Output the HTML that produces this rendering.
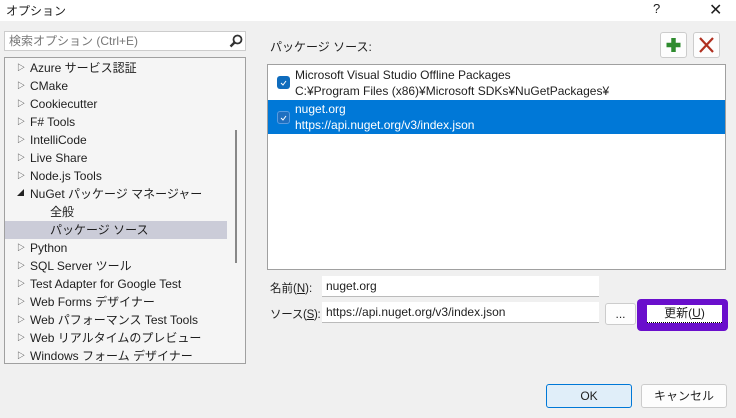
<!DOCTYPE html>
<html><head><meta charset="utf-8"><style>
*{box-sizing:border-box;margin:0;padding:0}
body{width:736px;height:418px;background:#f0f0f0;font-family:"Liberation Sans","Noto Sans CJK JP",sans-serif;font-size:12px;color:#1e1e1e;position:relative;overflow:hidden}
.a{position:absolute}
.title{left:0;top:0;width:736px;height:21px;background:#fff}
.search{left:4px;top:31px;width:242px;height:20px;background:#fff;border:1px solid #ccc;color:#777;padding:1px 4px;line-height:16px}
.tree{left:4px;top:57px;width:242px;height:307px;background:#f5f5f5;border:1px solid #a0a0a0}
.row{position:absolute;left:0;width:222px;height:18px;line-height:18px;white-space:nowrap}
.arr{position:absolute;left:12px;top:0;font-size:8px;color:#222}
.lbl{position:absolute;left:25px}
.list{left:267px;top:64px;width:459px;height:206px;background:#fff;border:1px solid #a0a0a0}
.item{position:absolute;left:0;width:457px;height:35px}
.cb{position:absolute;left:9px;top:11px;width:13px;height:13px;border-radius:3px;background:#0f6cbd}
.t1{position:absolute;left:27px;top:2px;line-height:16px}
.tb{background:#fff;border-bottom:1px solid #bbb;height:21px;padding-left:4px;line-height:21px}
.btn{background:#fdfdfd;border:1px solid #ccc;border-radius:3px;text-align:center}
</style></head><body>
<div class="a title"></div>
<div class="a" style="left:6px;top:2px;font-size:12px">オプション</div>
<div class="a" style="left:653px;top:1px;font-size:13px">?</div>
<div class="a" style="left:709px;top:0px;font-size:16px">✕</div>

<div class="a search">検索オプション (Ctrl+E)</div>
<svg class="a" style="left:229px;top:34px" width="14" height="14" viewBox="0 0 14 14"><circle cx="8.5" cy="5.5" r="4" fill="none" stroke="#333" stroke-width="1.8"/><path d="M5.5 8.5L1.5 12.5" stroke="#333" stroke-width="2.4"/></svg>

<div class="a tree">
<div style="position:absolute;left:230px;top:72px;width:2px;height:133px;background:#888"></div>
<div class="row" style="top:1px"><span class="arr">▷</span><span class="lbl">Azure サービス認証</span></div>
<div class="row" style="top:19px"><span class="arr">▷</span><span class="lbl">CMake</span></div>
<div class="row" style="top:37px"><span class="arr">▷</span><span class="lbl">Cookiecutter</span></div>
<div class="row" style="top:55px"><span class="arr">▷</span><span class="lbl">F# Tools</span></div>
<div class="row" style="top:73px"><span class="arr">▷</span><span class="lbl">IntelliCode</span></div>
<div class="row" style="top:91px"><span class="arr">▷</span><span class="lbl">Live Share</span></div>
<div class="row" style="top:109px"><span class="arr">▷</span><span class="lbl">Node.js Tools</span></div>
<div class="row" style="top:127px"><span class="arr" style="font-size:7px">◢</span><span class="lbl">NuGet パッケージ マネージャー</span></div>
<div class="row" style="top:145px"><span class="lbl" style="left:45px">全般</span></div>
<div class="row" style="top:163px;background:#cbccd8"><span class="lbl" style="left:45px">パッケージ ソース</span></div>
<div class="row" style="top:181px"><span class="arr">▷</span><span class="lbl">Python</span></div>
<div class="row" style="top:199px"><span class="arr">▷</span><span class="lbl">SQL Server ツール</span></div>
<div class="row" style="top:217px"><span class="arr">▷</span><span class="lbl">Test Adapter for Google Test</span></div>
<div class="row" style="top:235px"><span class="arr">▷</span><span class="lbl">Web Forms デザイナー</span></div>
<div class="row" style="top:253px"><span class="arr">▷</span><span class="lbl">Web パフォーマンス Test Tools</span></div>
<div class="row" style="top:271px"><span class="arr">▷</span><span class="lbl">Web リアルタイムのプレビュー</span></div>
<div class="row" style="top:289px"><span class="arr">▷</span><span class="lbl">Windows フォーム デザイナー</span></div>
</div>

<div class="a" style="left:270px;top:38px">パッケージ ソース:</div>
<div class="a btn" style="left:660px;top:32px;width:27px;height:26px"><svg width="25" height="24" viewBox="0 0 25 24"><path d="M12.5 5v14M5.5 12h14" stroke="#2e8b2e" stroke-width="4.5"/></svg></div>
<div class="a btn" style="left:693px;top:32px;width:27px;height:26px"><svg width="25" height="24" viewBox="0 0 25 24"><path d="M6 5l13 14M19 5L6 19" stroke="#b03020" stroke-width="2.2"/></svg></div>

<div class="a list">
<div class="item" style="top:0">
<div class="cb"><svg width="13" height="13"><path d="M4 7l2 2 3-4" stroke="#fff" fill="none" stroke-width="1"/></svg></div>
<div class="t1">Microsoft Visual Studio Offline Packages<br>C:¥Program Files (x86)¥Microsoft SDKs¥NuGetPackages¥</div></div>
<div class="item" style="top:35px;background:#0078d7;color:#fff;height:34px">
<div class="cb" style="background:#1f6fc0;border:1px solid #5a9be0"><svg width="11" height="11"><path d="M3 6l2 2 3-4" stroke="#fff" fill="none" stroke-width="1"/></svg></div>
<div class="t1" style="top:1px">nuget.org<br>https://api.nuget.org/v3/index.json</div></div>
</div>

<div class="a" style="left:270px;top:280px;font-size:11.5px">名前(<u>N</u>):</div>
<div class="a tb" style="left:322px;top:276px;width:277px">nuget.org</div>
<div class="a" style="left:270px;top:306px;font-size:11.5px;letter-spacing:-0.3px">ソース(<u>S</u>):</div>
<div class="a tb" style="left:322px;top:302px;width:277px">https://api.nuget.org/v3/index.json</div>
<div class="a btn" style="left:605px;top:303px;width:31px;height:22px;line-height:20px">...</div>
<div class="a" style="left:637px;top:299px;width:91px;height:32px;background:#6a0fcc;border-radius:4px"></div>
<div class="a" style="left:647px;top:305px;width:75px;height:18px;background:#fff;text-align:center;line-height:17px;border-bottom:1px dotted #000">更新(<u>U</u>)</div>

<div class="a btn" style="left:546px;top:384px;width:86px;height:24px;line-height:22px;background:#e0eef9;border-color:#0078d7">OK</div>
<div class="a btn" style="left:641px;top:384px;width:86px;height:24px;line-height:22px">キャンセル</div>
</body></html>
